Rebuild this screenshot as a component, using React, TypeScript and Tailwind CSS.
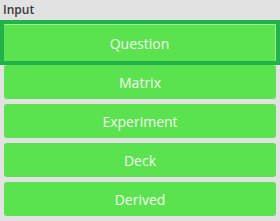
import React from 'react';

const items = ['Question', 'Matrix', 'Experiment', 'Deck', 'Derived'];

export default function App() {
  const selected = 0;

  return (
    <div className="h-[221px] w-[280px] overflow-hidden bg-[#e2e2e2] font-['Open_Sans',sans-serif]">
      <div className="h-5 pl-[3px] text-[12px] font-semibold leading-5 text-[#3a3a3a]">Input</div>
      <div className="flex flex-col gap-[5px]">
        {items.map((label, index) =>
          index === selected ? (
            <div key={label} className="-mb-[5px] h-[45px] border-4 border-[#22b24c] bg-[#5be24f]">
              <div className="flex h-full items-center justify-center border-t border-r border-[#b6f2a8]/70 text-[14px] text-[#f3fff0]">
                {label}
              </div>
            </div>
          ) : (
            <div
              key={label}
              className="mx-1 flex h-[34px] items-center justify-center rounded-[3px] bg-[#5be24f] text-[14px] text-[#f3fff0]"
            >
              {label}
            </div>
          ),
        )}
      </div>
    </div>
  );
}
